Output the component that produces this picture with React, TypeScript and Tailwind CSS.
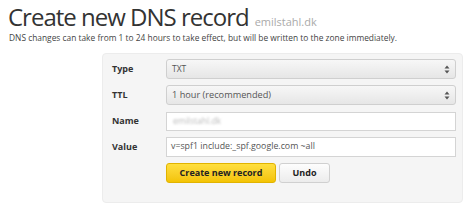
import React from "react";

function Arrows() {
  return (
    <svg width="6" height="9" viewBox="0 0 6 9" className="shrink-0">
      <path d="M3 0.5 L5.5 3.5 L0.5 3.5 Z" fill="#555" />
      <path d="M3 8.5 L5.5 5.5 L0.5 5.5 Z" fill="#555" />
    </svg>
  );
}

function Row({ label, children }: { label: string; children: React.ReactNode }) {
  return (
    <div className="flex items-center h-[20px]">
      <div className="w-[54px] shrink-0 text-[9px] font-bold text-[#333]">{label}</div>
      {children}
    </div>
  );
}

export default function App() {
  return (
    <div
      className="w-[474px] h-[211px] bg-white overflow-hidden"
      style={{ fontFamily: '"Open Sans", sans-serif' }}
    >
      <div className="pl-[8px] pt-[2px] flex items-baseline gap-[6px]">
        <h1 className="text-[24px] leading-[30px] text-[#333] tracking-[-1px]">Create new DNS record</h1>
        <span className="text-[11px] text-[#aaa]">emilstahl.dk</span>
      </div>
      <p className="pl-[9px] text-[8.4px] leading-[12px] text-[#444]">
        DNS changes can take from 1 to 24 hours to take effect, but will be written to the zone immediately.
      </p>
      <div className="ml-[102px] mt-[9px] w-[361px] rounded-[4px] border border-[#ececec] bg-[#f5f5f5] pl-[9px] pr-[6px] pt-[5px] pb-[19px] flex flex-col gap-[6px]">
        <Row label="Type">
          <div className="flex-1 h-[20px] rounded-[3px] border border-[#cfcfcf] bg-gradient-to-b from-[#f7f7f7] to-[#e6e6e6] flex items-center justify-between pl-[5px] pr-[5px] text-[8.5px] text-[#555]">
            <span>TXT</span>
            <Arrows />
          </div>
        </Row>
        <Row label="TTL">
          <div className="flex-1 h-[20px] rounded-[3px] border border-[#cfcfcf] bg-gradient-to-b from-[#f7f7f7] to-[#e6e6e6] flex items-center justify-between pl-[5px] pr-[5px] text-[9.2px] text-[#555]">
            <span>1 hour (recommended)</span>
            <Arrows />
          </div>
        </Row>
        <Row label="Name">
          <div className="flex-1 h-[19px] border border-[#d4d4d4] bg-white flex items-center pl-[6px]">
            <span className="text-[8.5px] text-[#bbb] blur-[1.2px]">emilstahl.dk</span>
          </div>
        </Row>
        <Row label="Value">
          <div className="flex-1 h-[20px] border border-[#d4d4d4] bg-white flex items-center pl-[4px] text-[8.8px] text-[#555]">
            v=spf1 include:_spf.google.com ~all
          </div>
        </Row>
        <div className="flex pl-[54px] gap-[3px]">
          <div className="w-[110px] h-[20px] rounded-[3px] border border-[#e1b300] bg-gradient-to-b from-[#ffdf3d] to-[#f3c300] flex items-center justify-center text-[9px] font-bold text-[#222]">
            Create new record
          </div>
          <div className="w-[51px] h-[20px] rounded-[3px] border border-[#d0d0d0] bg-gradient-to-b from-[#fdfdfd] to-[#ececec] flex items-center justify-center text-[9px] font-bold text-[#222]">
            Undo
          </div>
        </div>
      </div>
    </div>
  );
}
